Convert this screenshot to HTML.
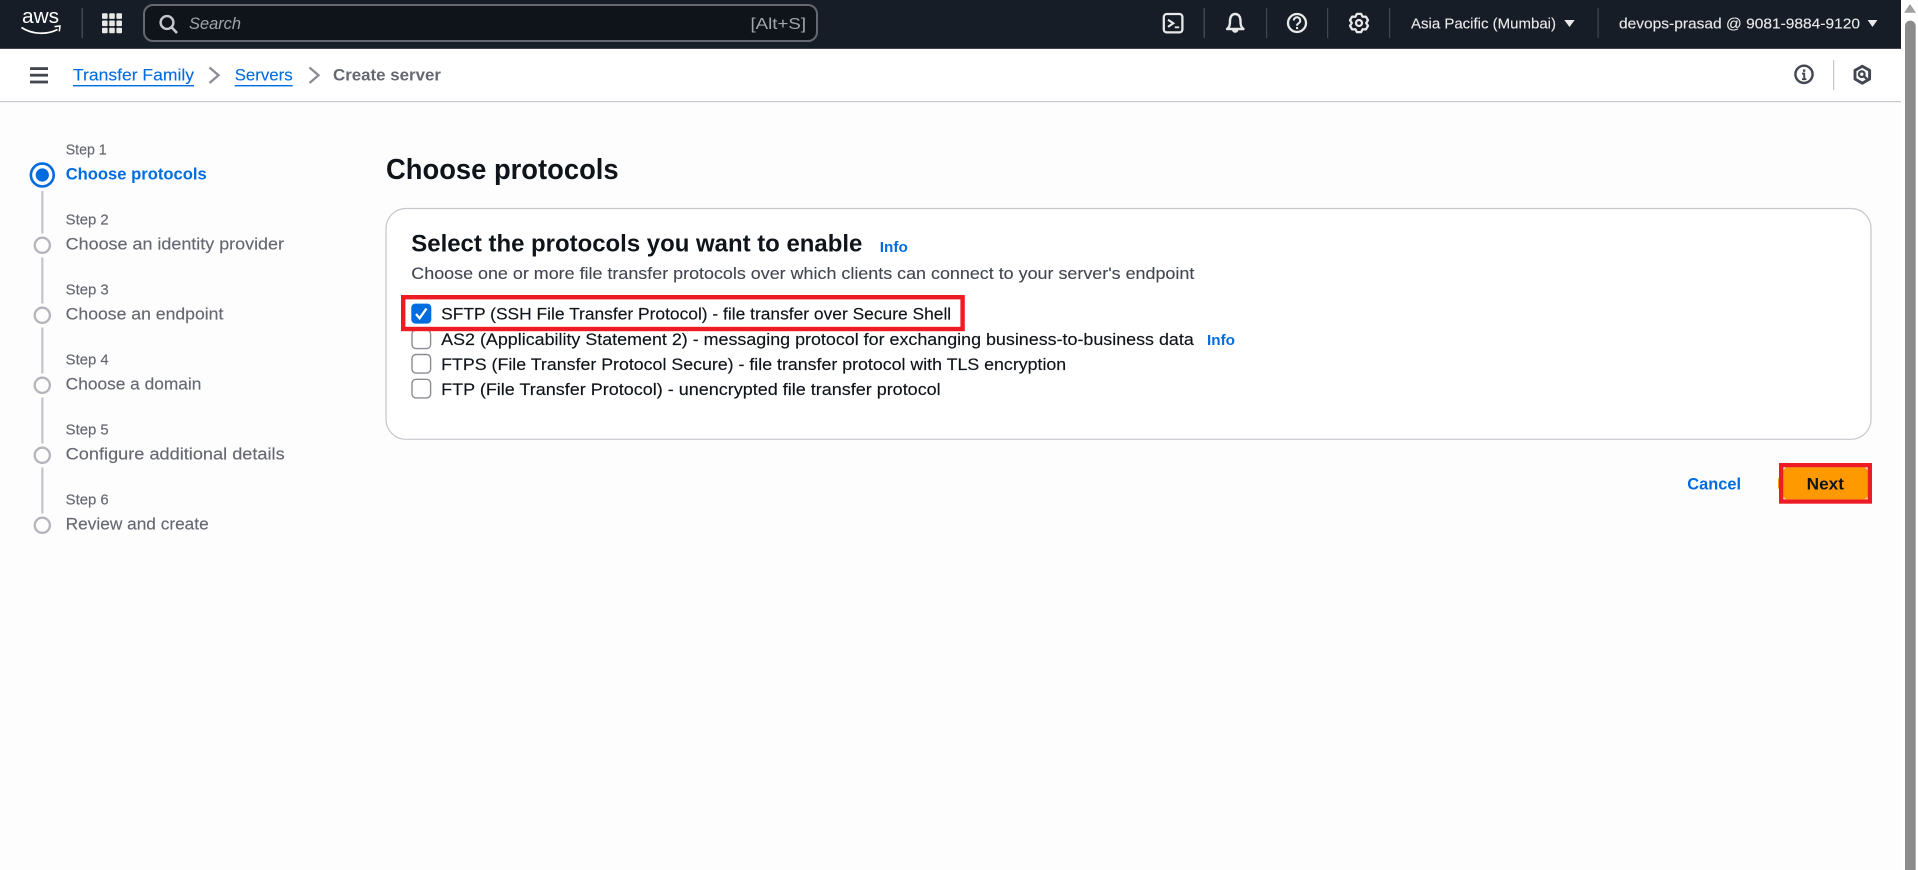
<!DOCTYPE html>
<html lang="en">
<head>
<meta charset="utf-8">
<title>Create server - Transfer Family</title>
<style>
html,body{margin:0;padding:0;width:1918px;height:870px;overflow:hidden;background:#fdfdfd}
svg{display:block;position:absolute;left:0;top:0}
text{font-family:"Liberation Sans",sans-serif;white-space:pre}
.b{font-weight:700}
.l{fill:#0f141a;stroke:#0f141a;stroke-width:.15;font-size:17px}
.st{fill:#656871;stroke:#656871;stroke-width:.15;font-size:14.5px}
.sl{fill:#656871;stroke:#656871;stroke-width:.15;font-size:17px}
.hd{fill:#eaeaea;stroke:#eaeaea;stroke-width:.12;font-size:15px}
</style>
</head>
<body>
<svg width="1918" height="870" viewBox="0 0 1918 870" xmlns="http://www.w3.org/2000/svg">
<rect width="1918" height="870" fill="#fdfdfd"/>

<!-- top header -->
<rect x="0" y="0" width="1901" height="48" fill="#161d26"/>
<rect x="0" y="48" width="1901" height="1" fill="#424650"/>
<text x="22" y="23" fill="#fff" font-size="20" textLength="37" lengthAdjust="spacingAndGlyphs">aws</text>
<path d="M21.5 27.5C32 34.5 47 35 57.5 29.5" fill="none" stroke="#fff" stroke-width="1.7"/>
<path d="M54.5 26.6L60 26l-.7 5.4" fill="none" stroke="#fff" stroke-width="1.5"/>
<rect x="81.5" y="8" width="1.5" height="30" fill="#424650"/>
<g fill="#e8e8e8">
<rect x="102" y="13.3" width="5.6" height="5.6" rx="1"/><rect x="109.2" y="13.3" width="5.6" height="5.6" rx="1"/><rect x="116.4" y="13.3" width="5.6" height="5.6" rx="1"/>
<rect x="102" y="20.5" width="5.6" height="5.6" rx="1"/><rect x="109.2" y="20.5" width="5.6" height="5.6" rx="1"/><rect x="116.4" y="20.5" width="5.6" height="5.6" rx="1"/>
<rect x="102" y="27.7" width="5.6" height="5.6" rx="1"/><rect x="109.2" y="27.7" width="5.6" height="5.6" rx="1"/><rect x="116.4" y="27.7" width="5.6" height="5.6" rx="1"/>
</g>
<rect x="144" y="5" width="673" height="36" rx="9" fill="#0f141a" stroke="#656871" stroke-width="2"/>
<circle cx="167" cy="22.5" r="6.4" fill="none" stroke="#c6c6cd" stroke-width="2.4"/>
<path d="M171.8 27.5L177 33" stroke="#c6c6cd" stroke-width="2.6" fill="none"/>
<text x="189" y="29" fill="#a4a4ad" font-size="16.5" font-style="italic" textLength="52" lengthAdjust="spacingAndGlyphs">Search</text>
<text x="750.5" y="29" fill="#a4a4ad" font-size="16" textLength="55.5" lengthAdjust="spacingAndGlyphs">[Alt+S]</text>

<rect x="1163.8" y="14" width="18.6" height="18.4" rx="3" fill="none" stroke="#e8e8e8" stroke-width="2.3"/>
<path d="M1168 19.8L1173.3 23.3L1168 26.9" fill="none" stroke="#e8e8e8" stroke-width="2.1"/>
<path d="M1174.8 27.3H1179.2" fill="none" stroke="#e8e8e8" stroke-width="1.8"/>
<rect x="1203.5" y="8" width="1.5" height="30" fill="#424650"/>
<path d="M1227 29C1229.5 27 1230 25 1230 21C1230 16.5 1232 14 1235.2 14C1238.5 14 1240.5 16.5 1240.5 21C1240.5 25 1241 27 1243.5 29Z" fill="none" stroke="#e8e8e8" stroke-width="2.4" stroke-linejoin="round"/>
<path d="M1232 29.6a3.2 3.2 0 0 0 6.4 0z" fill="#e8e8e8"/>
<rect x="1266" y="8" width="1.2" height="30" fill="#424650"/>
<circle cx="1297" cy="23" r="9" fill="none" stroke="#e8e8e8" stroke-width="2.3"/>
<path d="M1293.8 20.5a3.2 3.2 0 1 1 5 2.6c-1.1.8-1.8 1.3-1.8 2.7" fill="none" stroke="#e8e8e8" stroke-width="2"/>
<rect x="1296" y="27" width="2.1" height="2.1" fill="#e8e8e8"/>
<rect x="1327" y="8" width="1.2" height="30" fill="#424650"/>
<g transform="translate(1359 23)" fill="none" stroke="#e8e8e8" stroke-width="2.3" stroke-linejoin="round">
<path d="M2.11-9.16L-2.11-9.16L-3.6-6.24L-6.87-6.41L-8.99-2.75L-7.2 0L-8.99 2.75L-6.87 6.41L-3.6 6.24L-2.11 9.16L2.11 9.16L3.6 6.24L6.87 6.41L8.99 2.75L7.2 0L8.99-2.75L6.87-6.41L3.6-6.24Z"/>
<circle r="3"/>
</g>
<rect x="1389" y="8" width="1.2" height="30" fill="#424650"/>
<text class="hd" x="1411" y="28.5" textLength="145" lengthAdjust="spacingAndGlyphs">Asia Pacific (Mumbai)</text>
<path d="M1564.3 20H1574.7L1569.5 27Z" fill="#eaeaea"/>
<rect x="1597.5" y="8" width="1.2" height="30" fill="#424650"/>
<text class="hd" x="1619" y="28.5" textLength="241" lengthAdjust="spacingAndGlyphs">devops-prasad @ 9081-9884-9120</text>
<path d="M1867.6 20H1877.4L1872.5 27Z" fill="#eaeaea"/>

<!-- scrollbar -->
<rect x="1901" y="0" width="17" height="870" fill="#fff"/>
<path d="M1910 4L1916 12.8H1904Z" fill="#a0a0a0"/>
<path d="M1905 870V26a5.3 5.3 0 0 1 10.7 0V870Z" fill="#8b8b8b"/>

<!-- breadcrumb bar -->
<rect x="0" y="49" width="1901" height="52" fill="#fff"/>
<rect x="0" y="101" width="1901" height="1.2" fill="#c6c6cd"/>
<g fill="#424650"><rect x="30" y="67.2" width="18" height="2.8"/><rect x="30" y="73.8" width="18" height="2.8"/><rect x="30" y="80.6" width="18" height="2.8"/></g>
<text x="73" y="80.5" fill="#006ce0" stroke="#006ce0" stroke-width=".12" font-size="17" textLength="121" lengthAdjust="spacingAndGlyphs">Transfer Family</text>
<rect x="73" y="85" width="121" height="1.4" fill="#006ce0"/>
<path d="M209.5 67.5L218.5 75.3L209.5 83" fill="none" stroke="#8c8c94" stroke-width="2.3"/>
<text x="234.7" y="80.5" fill="#006ce0" stroke="#006ce0" stroke-width=".12" font-size="17" textLength="58" lengthAdjust="spacingAndGlyphs">Servers</text>
<rect x="234.7" y="85" width="58" height="1.4" fill="#006ce0"/>
<path d="M309.5 67.5L318.5 75.3L309.5 83" fill="none" stroke="#8c8c94" stroke-width="2.3"/>
<text class="b" x="333" y="80.5" fill="#656871" font-size="16.5" textLength="108" lengthAdjust="spacingAndGlyphs">Create server</text>
<circle cx="1804" cy="74.3" r="8.6" fill="none" stroke="#424650" stroke-width="2.4"/>
<rect x="1803" y="69.5" width="2.3" height="2.3" fill="#424650"/>
<path d="M1802 73.6H1804.2V79M1802 79.2H1806.4" fill="none" stroke="#424650" stroke-width="1.9"/>
<rect x="1833" y="60" width="1.2" height="30" fill="#c6c6cd"/>
<path d="M1862.3 66.2L1869.6 70.4V79L1862.3 83.2L1855 79V70.4Z" fill="none" stroke="#424650" stroke-width="2.9" stroke-linejoin="round"/>
<circle cx="1861.8" cy="74.2" r="2.8" fill="none" stroke="#424650" stroke-width="2.3"/>
<path d="M1864 76.3L1868.5 80.5" stroke="#424650" stroke-width="2.4" fill="none"/>

<!-- wizard steps -->
<text class="st" x="65.7" y="154.6" textLength="41" lengthAdjust="spacingAndGlyphs">Step 1</text>
<text class="b" x="65.7" y="179.6" fill="#006ce0" font-size="17" textLength="141" lengthAdjust="spacingAndGlyphs">Choose protocols</text>
<text class="st" x="65.7" y="224.6" textLength="43" lengthAdjust="spacingAndGlyphs">Step 2</text>
<text class="sl" x="65.7" y="249.6" textLength="218.3" lengthAdjust="spacingAndGlyphs">Choose an identity provider</text>
<text class="st" x="65.7" y="294.6" textLength="43" lengthAdjust="spacingAndGlyphs">Step 3</text>
<text class="sl" x="65.7" y="319.6" textLength="157.7" lengthAdjust="spacingAndGlyphs">Choose an endpoint</text>
<text class="st" x="65.7" y="364.6" textLength="43" lengthAdjust="spacingAndGlyphs">Step 4</text>
<text class="sl" x="65.7" y="389.6" textLength="135.7" lengthAdjust="spacingAndGlyphs">Choose a domain</text>
<text class="st" x="65.7" y="434.6" textLength="43" lengthAdjust="spacingAndGlyphs">Step 5</text>
<text class="sl" x="65.7" y="459.6" textLength="219" lengthAdjust="spacingAndGlyphs">Configure additional details</text>
<text class="st" x="65.7" y="504.6" textLength="43" lengthAdjust="spacingAndGlyphs">Step 6</text>
<text class="sl" x="65.7" y="529.6" textLength="143" lengthAdjust="spacingAndGlyphs">Review and create</text>

<circle cx="42.3" cy="175" r="11.4" fill="#fff" stroke="#006ce0" stroke-width="2.6"/>
<circle cx="42.3" cy="175" r="6.6" fill="#006ce0"/>
<g fill="none" stroke="#b4b4bb" stroke-width="2.3">
<circle cx="42.3" cy="245.3" r="7.6"/><circle cx="42.3" cy="315.3" r="7.6"/><circle cx="42.3" cy="385.3" r="7.6"/><circle cx="42.3" cy="455.3" r="7.6"/><circle cx="42.3" cy="525.3" r="7.6"/>
</g>
<g fill="#c6c6cd">
<rect x="41.2" y="191" width="2.3" height="42.5"/><rect x="41.2" y="257.5" width="2.3" height="46"/><rect x="41.2" y="327.5" width="2.3" height="46"/><rect x="41.2" y="397.5" width="2.3" height="46"/><rect x="41.2" y="467.5" width="2.3" height="46"/>
</g>

<!-- main -->
<text class="b" x="386" y="179" fill="#0f141a" font-size="29" textLength="232.6" lengthAdjust="spacingAndGlyphs">Choose protocols</text>
<rect x="386" y="208.5" width="1485" height="230.8" rx="20" fill="#fff" stroke="#c6c6cd" stroke-width="1.2"/>
<text class="b" x="411.3" y="251.4" fill="#0f141a" font-size="24" textLength="451" lengthAdjust="spacingAndGlyphs">Select the protocols you want to enable</text>
<text class="b" x="879.8" y="252" fill="#006ce0" font-size="14.5" textLength="28" lengthAdjust="spacingAndGlyphs">Info</text>
<text x="411.3" y="279" fill="#424650" stroke="#424650" stroke-width=".12" font-size="17" textLength="783" lengthAdjust="spacingAndGlyphs">Choose one or more file transfer protocols over which clients can connect to your server's endpoint</text>

<!-- options -->
<rect x="412" y="330" width="18.6" height="18.6" rx="4" fill="#fff" stroke="#8c8c94" stroke-width="1.4"/>
<rect x="412" y="354.5" width="18.6" height="18.6" rx="4" fill="#fff" stroke="#8c8c94" stroke-width="1.4"/>
<rect x="412" y="379.3" width="18.6" height="18.6" rx="4" fill="#fff" stroke="#8c8c94" stroke-width="1.4"/>
<rect x="403.2" y="297.2" width="559.4" height="31.8" fill="#fff" stroke="#ed1c24" stroke-width="4.4"/>
<rect x="411.3" y="303.6" width="20" height="20" rx="4" fill="#006ce0"/>
<path d="M416 314L419.6 318.3L426.5 308.5" fill="none" stroke="#fff" stroke-width="2.3"/>
<text class="l" x="441.2" y="319.5" textLength="510" lengthAdjust="spacingAndGlyphs">SFTP (SSH File Transfer Protocol) - file transfer over Secure Shell</text>
<text class="l" x="441.2" y="345" textLength="752.6" lengthAdjust="spacingAndGlyphs">AS2 (Applicability Statement 2) - messaging protocol for exchanging business-to-business data</text>
<text class="b" x="1207" y="345" fill="#006ce0" font-size="14.5" textLength="28" lengthAdjust="spacingAndGlyphs">Info</text>
<text class="l" x="441.2" y="370" textLength="625" lengthAdjust="spacingAndGlyphs">FTPS (File Transfer Protocol Secure) - file transfer protocol with TLS encryption</text>
<text class="l" x="441.2" y="395" textLength="499.5" lengthAdjust="spacingAndGlyphs">FTP (File Transfer Protocol) - unencrypted file transfer protocol</text>

<!-- actions -->
<text class="b" x="1687.3" y="489.6" fill="#006ce0" font-size="17" textLength="53.7" lengthAdjust="spacingAndGlyphs">Cancel</text>
<rect x="1778" y="477" width="6" height="13" rx="3" fill="#ff9900"/>
<rect x="1781.2" y="465.2" width="88.6" height="36.3" fill="#fff" stroke="#ed1c24" stroke-width="4.4"/>
<rect x="1783.4" y="467.4" width="84.2" height="32" rx="4" fill="#ff9900"/>
<text class="b" x="1806.7" y="489.6" fill="#0f141a" font-size="17" textLength="37.3" lengthAdjust="spacingAndGlyphs">Next</text>
</svg>
</body>
</html>
